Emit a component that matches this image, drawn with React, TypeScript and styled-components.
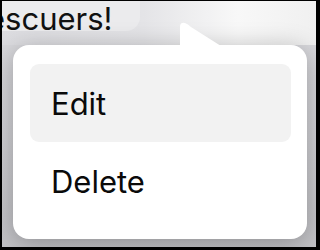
import styled, { createGlobalStyle } from "styled-components";

const GlobalStyle = createGlobalStyle`
  html, body {
    margin: 0;
    padding: 0;
    background: #000;
  }
  body {
    font-family: Inter, "Noto Sans", "Liberation Sans", sans-serif;
  }
`;

const Frame = styled.div`
  width: 320px;
  height: 250px;
  box-sizing: border-box;
  border-style: solid;
  border-color: #000;
  border-width: 1px 4px 3px 2px;
  background: #000;
`;

const Screen = styled.div`
  position: relative;
  width: 100%;
  height: 100%;
  overflow: hidden;
  display: flex;
  flex-direction: column;
  background: linear-gradient(180deg, #dcdce0 0%, #d0d0d4 55%, #c2c2c6 100%);
`;

const TopBand = styled.div`
  display: flex;
  height: 44px;
  background: linear-gradient(90deg, #dcdce0 0%, #e4e4e7 45%, #f8f8f8 75%, #f0f0f0 100%);
`;

const Bubble = styled.div`
  width: 142px;
  height: 30px;
  margin-left: -4px;
  background: #ebebed;
  border-radius: 0 0 14px 0;
  overflow: hidden;
  display: flex;
  align-items: flex-end;
`;

const BubbleText = styled.span`
  font-size: 31px;
  line-height: 31px;
  color: #111;
  white-space: nowrap;
  margin-left: -11px;
  transform: translateY(3px);
`;

const Popover = styled.div`
  position: absolute;
  left: 11px;
  top: 44px;
  width: 294px;
  height: 194px;
  box-sizing: border-box;
  padding: 19px 16px 19px 17px;
  background: #fff;
  border-radius: 16px;
  box-shadow: 0 4px 26px rgba(0, 0, 0, 0.28);
  display: flex;
  flex-direction: column;
`;

const Arrow = styled.svg`
  position: absolute;
  left: 166px;
  top: -23px;
  width: 44px;
  height: 24px;
  overflow: visible;
`;

const MenuItem = styled.div<{ $active?: boolean }>`
  height: 78px;
  box-sizing: border-box;
  padding-left: 21px;
  display: flex;
  align-items: center;
  border-radius: 9px;
  background: ${(p) => (p.$active ? "#f2f2f2" : "transparent")};
  font-size: 31px;
  color: #0a0a0a;
`;

export default function App() {
  return (
    <>
      <GlobalStyle />
      <Frame>
        <Screen>
          <TopBand>
            <Bubble>
              <BubbleText>escuers!</BubbleText>
            </Bubble>
          </TopBand>
          <Popover>
            <Arrow viewBox="0 0 44 24">
              <path d="M1 24 L1 5 Q1 0 6 1 Q9 2 12 5 L42 24 Z" fill="#fff" />
            </Arrow>
            <MenuItem $active>Edit</MenuItem>
            <MenuItem>Delete</MenuItem>
          </Popover>
        </Screen>
      </Frame>
    </>
  );
}
